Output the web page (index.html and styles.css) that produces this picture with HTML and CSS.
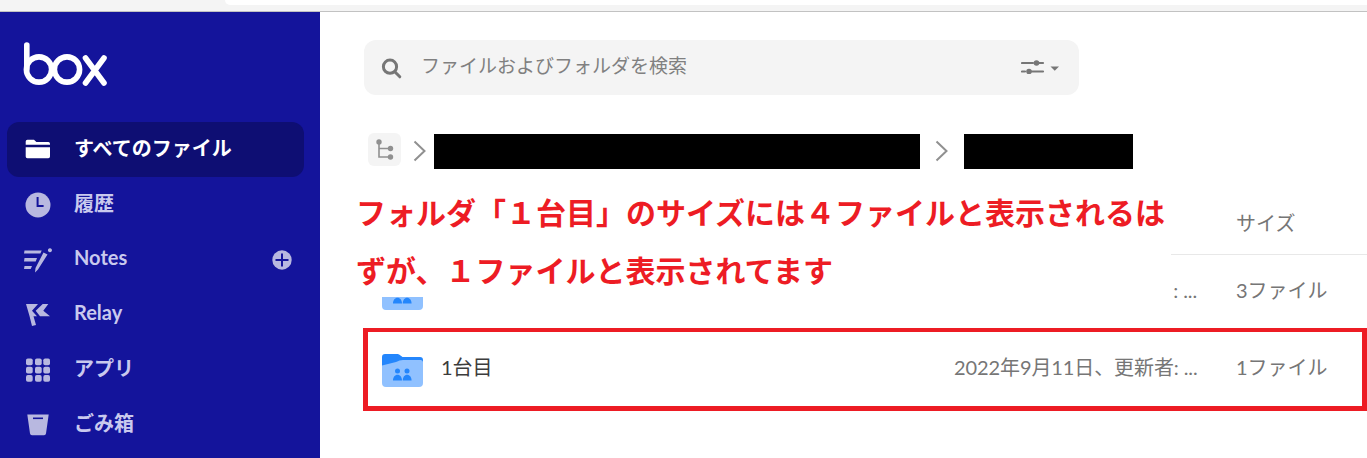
FILE: index.html
```html
<!DOCTYPE html>
<html lang="ja">
<head>
<meta charset="utf-8">
<title>Box</title>
<link rel="stylesheet" href="styles.css">
</head>
<body>
<div class="chrome"><div class="chrome-tab"></div></div>
<div class="app">
  <aside class="sidebar">
    <svg class="logo" width="86" height="46" viewBox="0 0 86 46" fill="none" stroke="#fff" stroke-width="5.6" stroke-linecap="round">
      <path d="M3.8 3v24"/>
      <circle cx="16" cy="27.5" r="12.6"/>
      <circle cx="44" cy="27.5" r="12.6"/>
      <path d="M62.5 16l18.5 25M81 16L62.5 41"/>
    </svg>
    <nav class="nav">
      <a class="nav-item active">
        <svg class="nav-icon" viewBox="0 0 26 26"><path class="ic" d="M.7 4.500a1.700 1.700 0 0 1 1.700-1.700h6.600l2.400 2.300h12a1.700 1.700 0 0 1 1.600 1.700v1H.7zM.7 10.200H25v9.300a1.700 1.700 0 0 1-1.700 1.700H2.400a1.700 1.700 0 0 1-1.700-1.700z"/></svg>
        <span class="label">すべてのファイル</span>
      </a>
      <a class="nav-item">
        <svg class="nav-icon" viewBox="0 0 26 26"><circle class="ic" cx="13" cy="13" r="12.5"/><path class="cut" d="M12.6 5v9h6" /></svg>
        <span class="label">履歴</span>
      </a>
      <a class="nav-item">
        <svg class="nav-icon wide" viewBox="0 0 30 26"><path class="ic" d="M1.500 3.500h17.200l-1.300 3H1zM1.500 11h12.500l-1.300 3.500H1zM1.500 19h7.500l-1.300 3H1zM20.500 5.500l4 2-9.500 15-3 3 .5-4.500zM27 1.300a2 2 0 1 1-.1 0z"/></svg>
        <span class="label">Notes</span>
        <svg class="plus" width="20" height="20" viewBox="0 0 20 20"><circle class="ic" cx="10" cy="10" r="9.700"/><path class="cut" d="M10 3.500v13M3.500 10h13"/></svg>
      </a>
      <a class="nav-item">
        <svg class="nav-icon" viewBox="0 0 26 26"><path class="ic" d="M1 2h12L7 8.700l5 5.600H8.500L11 23l-4 1-2.500-10zM17.700 2h5.600l-5 6.700L25 14.300H15L10.700 8.700z"/></svg>
        <span class="label">Relay</span>
      </a>
      <a class="nav-item">
        <svg class="nav-icon" viewBox="0 0 26 26"><g class="ic"><rect x="1" y="1.500" width="6.700" height="6.700" rx="1.800"/><rect x="10" y="1.500" width="6.700" height="6.700" rx="1.800"/><rect x="18.300" y="1.500" width="6.700" height="6.700" rx="1.800"/><rect x="1" y="9.800" width="6.700" height="6.700" rx="1.800"/><rect x="10" y="9.800" width="6.700" height="6.700" rx="1.800"/><rect x="18.300" y="9.800" width="6.700" height="6.700" rx="1.800"/><rect x="1" y="18.100" width="6.700" height="6.700" rx="1.800"/><rect x="10" y="18.100" width="6.700" height="6.700" rx="1.800"/><rect x="18.300" y="18.100" width="6.700" height="6.700" rx="1.800"/></g></svg>
        <span class="label">アプリ</span>
      </a>
      <a class="nav-item">
        <svg class="nav-icon" viewBox="0 0 26 26"><path class="ic" d="M2.300 2.500h21.400l-2.700 19a2 2 0 0 1-2 1.700H7a2 2 0 0 1-2-1.700z"/><rect class="slit" x="8" y="5.500" width="10" height="1.600"/></svg>
        <span class="label">ごみ箱</span>
      </a>
    </nav>
  </aside>

  <main class="content">
    <div class="search">
      <svg class="search-icon" width="22" height="22" viewBox="0 0 22 22" fill="none" stroke="#767676" stroke-width="3"><circle cx="10" cy="9.700" r="6.600"/><path d="M14.800 14.800l5 5" stroke-linecap="round"/></svg>
      <span class="placeholder">ファイルおよびフォルダを検索</span>
      <svg class="filter" width="40" height="14" viewBox="0 0 40 14">
        <path d="M1 3h11M17 3h5M1 11.500h3M10 11.500h12" stroke="#767676" stroke-width="2.200" stroke-linecap="round" fill="none"/>
        <circle cx="15.500" cy="3" r="2.800" fill="#767676"/><circle cx="8" cy="11.500" r="2.800" fill="#767676"/>
        <path d="M29.500 6.500h8.500l-4.250 4.200z" fill="#767676"/>
      </svg>
    </div>

    <div class="crumbs">
      <span class="tree">
        <svg width="33" height="33" viewBox="0 0 33 33" fill="none" stroke="#909090" stroke-width="1.600"><path d="M11 9v15h11M11 15.500h11"/><g fill="#909090" stroke="none"><circle cx="11" cy="9" r="2.700"/><circle cx="22.500" cy="15.500" r="2.700"/><circle cx="22.500" cy="24" r="2.700"/></g></svg>
      </span>
      <svg class="chev" width="14" height="22" viewBox="0 0 14 22" fill="none" stroke="#909090" stroke-width="2"><path d="M1.500 1.500L11.500 11 1.500 20.500"/></svg>
      <span class="redact redact-a"></span>
      <svg class="chev" width="14" height="22" viewBox="0 0 14 22" fill="none" stroke="#909090" stroke-width="2"><path d="M1.500 1.500L11.500 11 1.500 20.500"/></svg>
      <span class="redact redact-b"></span>
    </div>

    <section class="table">
      <div class="row head">
        <span></span><span></span><span></span>
        <span class="size">サイズ</span>
      </div>
      <div class="row first">
        <svg class="folder" width="41" height="33" viewBox="0 0 41 33"><use href="#folder-shape"/></svg>
        <span class="name"></span>
        <span class="date tail">: ...</span>
        <span class="size">3ファイル</span>
      </div>
      <div class="row second">
        <svg class="folder" width="41" height="33" viewBox="0 0 41 33"><use href="#folder-shape"/></svg>
        <span class="name">1台目</span>
        <span class="date">2022年9月11日、更新者: ...</span>
        <span class="size">1ファイル</span>
      </div>
    </section>

    <div class="note">フォルダ「１台目」のサイズには４ファイルと表示されるはずが、１ファイルと表示されてます</div>
    <div class="frame"></div>
  </main>
</div>

<svg class="defs" width="0" height="0">
  <defs>
    <g id="folder-shape">
      <path fill="#2486fc" d="M0 3a3 3 0 0 1 3-3h12.500a3 3 0 0 1 2 .8L20.500 3H38a3 3 0 0 1 3 3v8H0z"/>
      <path fill="#90c1ff" d="M0 11.500l14-3.500q2-1 3.500-1.500L21 6h17.500a2.500 2.500 0 0 1 2.500 2.500V29a4 4 0 0 1-4 4H4a4 4 0 0 1-4-4z"/>
      <g fill="#2486fc"><circle cx="15.500" cy="17" r="2.500"/><circle cx="25" cy="17" r="2.500"/><path d="M11 26.500c0-3.500 2-5.800 4.500-5.800s4.500 2.300 4.500 5.800zM20.800 26.500c0-3.500 1.800-5.800 4.300-5.800s4.500 2.300 4.500 5.800z"/></g>
    </g>
  </defs>
</svg>
</body>
</html>
```
FILE: styles.css
```css
* { box-sizing: border-box; }
html, body { margin: 0; height: 100%; overflow: hidden; background: #fff; }
body {
  font-family: Lato, "Noto Sans CJK JP", sans-serif;
  display: flex;
  flex-direction: column;
}
.chrome {
  height: 12px;
  flex: none;
  background: #f4f4f4;
  border-bottom: 1px solid #c2c2c2;
}
.chrome-tab {
  height: 5px;
  margin-left: 225px;
  background: #fff;
  border-bottom-left-radius: 5px;
}
.app { flex: 1; display: flex; min-height: 0; }

.sidebar {
  width: 320px;
  flex: none;
  background: #14149b;
  display: flex;
  flex-direction: column;
}
.logo { display: block; margin: 30px 0 0 22.500px; flex: none; }
.nav { display: flex; flex-direction: column; margin-top: 34px; }
.nav-item {
  height: 55px;
  width: 297px;
  margin-left: 7px;
  padding: 0 12px 0 18px;
  display: flex;
  align-items: center;
  border-radius: 12px;
  color: #c9c9ee;
  font-size: 20px;
  font-weight: 700;
}
.nav-item.active { background: #0e0e73; color: #fff; }
.label { padding-bottom: 5px; }
.nav-icon { width: 26px; height: 26px; margin-right: 23px; flex: none; }
.nav-icon.wide { width: 30px; margin-left: -2px; margin-right: 21px; }
.ic { fill: #b8b8e0; }
.active .ic { fill: #fff; }
.cut { fill: none; stroke: #14149b; stroke-width: 2; }
.slit { fill: #14149b; }
.plus { margin-left: auto; }

.content { flex: 1; position: relative; min-width: 0; }
.search {
  margin: 28px 0 0 44px;
  width: 715px;
  height: 55px;
  background: #f4f4f4;
  border-radius: 12px;
  display: flex;
  align-items: center;
  padding: 0 18px 0 16px;
}
.search-icon { flex: none; }
.placeholder { margin-left: 19px; font-size: 19px; color: #808080; padding-bottom: 6px; }
.filter { margin-left: auto; margin-bottom: 2px; flex: none; }

.crumbs { display: flex; align-items: center; margin: 38px 0 0 48px; height: 36px; }
.tree {
  width: 33px; height: 33px;
  background: #f4f4f4;
  border-radius: 6px;
  margin-bottom: 3px;
  display: block;
}
.tree svg { display: block; }
.chev { margin-left: 12px; flex: none; }
.redact { background: #000; height: 35px; display: block; margin-left: 7px; }
.redact-a { width: 486px; }
.chev + .redact-b { width: 169px; margin-left: 15px; }
.redact-a + .chev { margin-left: 15px; }

.table { margin-top: 21px; }
.row {
  display: grid;
  grid-template-columns: 41px 1fr 264px 131px;
  align-items: center;
  column-gap: 18px;
  padding-left: 62px;
  font-size: 20px;
  color: #767676;
}
.head { height: 65px; border-bottom: 1px solid #e8e8e8; }
.first { height: 75px; padding-bottom: 6px; }
.second { height: 77px; padding-bottom: 4px; }
.folder { display: block; margin-top: 7px; }
.name { color: #3c3c3c; white-space: nowrap; }
.date { white-space: nowrap; letter-spacing: -0.1px; }
.tail { text-align: right; width: 243px; }

.note {
  position: absolute;
  left: 0;
  top: 170px;
  width: 851px;
  height: 115px;
  padding-left: 36px;
  background: #fff;
  color: #ed1c24;
  font-family: "Noto Sans CJK JP", sans-serif;
  font-size: 30px;
  font-weight: 700;
  line-height: 58px;
}
.frame {
  position: absolute;
  left: 43px;
  top: 316px;
  width: 1004px;
  height: 83px;
  border: 5px solid #ed1c24;
  border-top-width: 4px;
}
.defs { position: absolute; }
```
